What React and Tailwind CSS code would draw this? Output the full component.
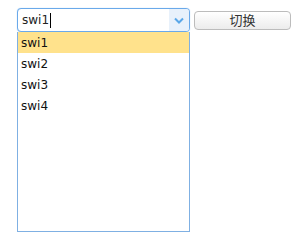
import React, { useState } from "react";

const items = ["swi1", "swi2", "swi3", "swi4"];

const App = () => {
  const [value, setValue] = useState("swi1");

  return (
    <div
      className="w-[294px] h-[246px] bg-white pl-[17px] pt-[8px]"
      style={{ fontFamily: '"DejaVu Sans", "Noto Sans CJK SC", sans-serif' }}
    >
      <div className="flex items-start">
        <div className="w-[173px]">
          {/* Combo input */}
          <div className="flex h-[24px] border border-[#6aa9ea] rounded-[4px] overflow-hidden bg-white shadow-[0_0_1px_#9cc8f3]">
            <div className="flex-1 flex items-center pl-[4px] text-[12px] text-[#222]">
              <span>{value}</span>
              <span className="w-px h-[15px] bg-black ml-[1px]" />
            </div>
            <div className="w-[20px] flex items-center justify-center bg-[#e8f1fb]">
              <svg width="10" height="7" viewBox="0 0 10 7">
                <path d="M1 1.5 L5 5.5 L9 1.5" fill="none" stroke="#5aa7e8" strokeWidth="2" />
              </svg>
            </div>
          </div>
          {/* Dropdown list */}
          <div className="h-[200px] border border-t-0 border-[#7fb0e3] bg-white">
            {items.map((it) => (
              <div
                key={it}
                onClick={() => setValue(it)}
                className={`h-[21px] flex items-center pl-[3px] text-[12px] text-[#111] ${
                  it === value ? "bg-[#ffe28c]" : ""
                }`}
              >
                {it}
              </div>
            ))}
          </div>
        </div>
        <button className="ml-[4px] mt-[3px] w-[97px] h-[19px] rounded-[4px] border border-[#bcbcbc] bg-gradient-to-b from-white to-[#ececec] text-[13px] leading-none text-[#333]">
          切换
        </button>
      </div>
    </div>
  );
};

export default App;
